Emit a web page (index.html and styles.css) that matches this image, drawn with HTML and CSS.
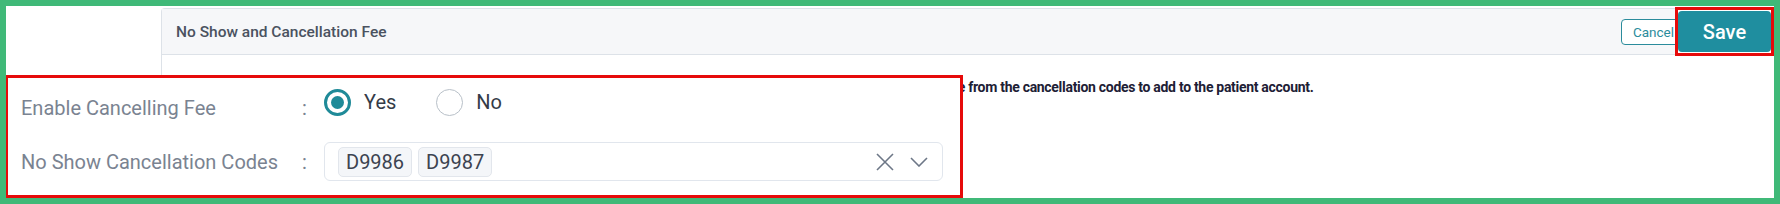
FILE: index.html
```html
<!DOCTYPE html>
<html lang="en">
<head>
    <meta charset="UTF-8">
    <meta name="viewport" content="width=device-width, initial-scale=1.0">
    <title>No Show and Cancellation Fee</title>
    <link rel="stylesheet" href="styles.css">
</head>
<body>
    <div class="frame">
        <div class="panel">
            <div class="panel-head">
                <h2 class="panel-title">No Show and Cancellation Fee</h2>
                <button class="btn-outline">Cancel</button>
            </div>
            <div class="panel-body">
                <p class="note">Select the applicable fee from the cancellation codes to add to the patient account.</p>
            </div>
        </div>

        <!-- highlighted areas -->
        <div class="callout callout-save">
            <button class="btn-save">Save</button>
        </div>

        <div class="callout callout-form">
            <div class="form-grid">
                <label class="field-label first-row">Enable Cancelling Fee</label>
                <span class="colon first-row">:</span>
                <div class="radios">
                    <label class="radio"><span class="radio-dot checked"></span>Yes</label>
                    <label class="radio"><span class="radio-dot"></span>No</label>
                </div>

                <label class="field-label">No Show Cancellation Codes</label>
                <span class="colon">:</span>
                <div class="select">
                    <span class="chip">D9986</span>
                    <span class="chip">D9987</span>
                    <span class="select-icons">
                        <svg width="20" height="20" viewBox="0 0 20 20"><path d="M2 2 L18 18 M18 2 L2 18" stroke="#6d7787" stroke-width="1.6" fill="none"/></svg>
                        <svg width="18" height="10" viewBox="0 0 18 10"><path d="M1 1 L9 9 L17 1" stroke="#6d7787" stroke-width="1.6" fill="none"/></svg>
                    </span>
                </div>
            </div>
        </div>
    </div>
</body>
</html>
```

FILE: styles.css
```css
body {
    margin: 0;
    font-family: Roboto, "Liberation Sans", sans-serif;
    background-color: #ffffff;
}
.frame {
    position: relative;
    box-sizing: border-box;
    width: 1780px;
    height: 204px;
    border: 6px solid #40b978;
    background-color: #ffffff;
    display: flex;
    overflow: hidden;
}
.panel {
    flex: 1;
    margin: 2px 0 0 155px;
    border-left: 1px solid #dde2e8;
    border-top: 1px solid #dde2e8;
    border-top-left-radius: 4px;
}
.panel-head {
    height: 45px;
    display: flex;
    align-items: center;
    justify-content: space-between;
    padding: 0 88px 0 14px;
    background-color: #f6f7f9;
    border-bottom: 1px solid #dde2e8;
}
.panel-title {
    margin: 0;
    font-size: 15.5px;
    font-weight: 500;
    color: #4a5260;
}
.btn-outline {
    height: 26px;
    padding: 0 11px;
    font-family: Roboto, sans-serif;
    font-size: 13.5px;
    color: #2b8c9c;
    background-color: #ffffff;
    border: 1px solid #2b8c9c;
    border-radius: 4px;
}
.panel-body {
    padding: 22px 0 0 656px;
}
.note {
    margin: 0;
    font-size: 14px;
    font-weight: 700;
    letter-spacing: -0.3px;
    line-height: 20px;
    color: #1d2035;
    white-space: nowrap;
}
.callout {
    position: absolute;
    box-sizing: border-box;
    border: 3px solid #e60a0a;
    background-color: #ffffff;
}
.callout-save {
    left: 1669px;
    top: 1px;
    width: 99px;
    height: 49px;
    padding: 1px 0;
}
.btn-save {
    width: 100%;
    height: 100%;
    font-family: Roboto, sans-serif;
    font-size: 20px;
    font-weight: 500;
    color: #ffffff;
    background-color: #1f8e9f;
    border: none;
    border-radius: 4px;
}
.callout-form {
    left: -1px;
    top: 69px;
    width: 958px;
    height: 123px;
}
.form-grid {
    display: grid;
    grid-template-columns: 281px 22px 619px;
    grid-template-rows: 28px 39px;
    row-gap: 26px;
    padding: 10px 0 0 13px;
}
.field-label,
.colon {
    font-size: 20px;
    line-height: 24px;
    color: #7a8391;
    align-self: center;
}
.first-row {
    align-self: start;
    margin-top: 8px;
}
.radios {
    display: flex;
    align-items: center;
    gap: 40px;
}
.radio {
    display: flex;
    align-items: center;
    gap: 13px;
    font-size: 20px;
    line-height: 24px;
    color: #343b47;
}
.radio-dot {
    box-sizing: border-box;
    width: 27px;
    height: 27px;
    border: 1.5px solid #b8c0c8;
    border-radius: 50%;
    display: flex;
    align-items: center;
    justify-content: center;
}
.radio-dot.checked {
    border: 3px solid #1f8a98;
}
.radio-dot.checked::after {
    content: "";
    width: 13px;
    height: 13px;
    border-radius: 50%;
    background-color: #1f8a98;
}
.select {
    box-sizing: border-box;
    height: 39px;
    display: flex;
    align-items: center;
    gap: 6px;
    padding: 0 14px 0 13px;
    border: 1.5px solid #e1e6ed;
    border-radius: 6px;
}
.chip {
    height: 30px;
    box-sizing: border-box;
    padding: 0 7px;
    font-size: 20px;
    line-height: 28px;
    color: #3c4350;
    background-color: #f4f6f9;
    border: 1px solid #e2e6ec;
    border-radius: 5px;
}
.select-icons {
    margin-left: auto;
    display: flex;
    align-items: center;
    gap: 15px;
}
```
